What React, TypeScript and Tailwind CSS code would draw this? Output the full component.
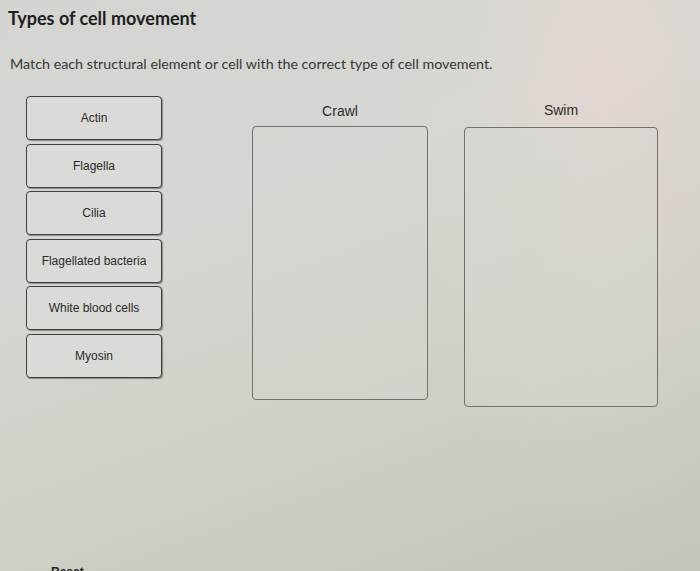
import React from "react";

const items = [
  "Actin",
  "Flagella",
  "Cilia",
  "Flagellated bacteria",
  "White blood cells",
  "Myosin",
];

// Drop zone with its label above
const Zone: React.FC<{ label: string; w: string; h: string; mt: string; mb: string }> = ({ label, w, h, mt, mb }) => (
  <div className={`flex flex-col items-center ${w} ${mt}`}>
    <div className={`text-[14px] text-[#2b2b2b] leading-[18px] ${mb} font-['Liberation_Sans',sans-serif]`}>
      {label}
    </div>
    <div className={`w-full ${h} border border-[#6f716c] rounded-[4px] bg-[#d6d8d2]/40`} />
  </div>
);

const App: React.FC = () => {
  return (
    <div className="w-[700px] h-[571px] overflow-hidden relative bg-[linear-gradient(160deg,#d4d5d0_0%,#d6d7d2_35%,#cdcec4_70%,#c3c5b8_100%)] font-['Lato',sans-serif]">
      {/* Warm glare on the right side */}
      <div className="absolute right-0 top-0 w-[320px] h-[571px] bg-[radial-gradient(ellipse_at_70%_20%,rgba(236,214,210,0.5),rgba(236,214,210,0)_65%)] pointer-events-none" />

      <div className="relative">
        <h1 className="pl-[8px] pt-[6px] text-[18px] font-bold text-[#1e1e1e] leading-[24px]">
          Types of cell movement
        </h1>
        <p className="pl-[10px] pt-[25px] text-[14.3px] text-[#353535] leading-[18px]">
          Match each structural element or cell with the correct type of cell movement.
        </p>

        <div className="flex pl-[26px] pt-[16px]">
          {/* Draggable answers */}
          <div className="flex flex-col gap-[3.5px] pt-[7px]">
            {items.map((t, i) => (
              <div
                key={i}
                className="w-[136px] h-[44px] flex items-center justify-center rounded-[4px] border-[1.5px] border-[#3f403d] bg-[#dadbd7] shadow-[1px_1px_1px_rgba(0,0,0,0.35)] text-[12px] text-[#2a2a2a] font-['Liberation_Sans',sans-serif]"
              >
                {t}
              </div>
            ))}
          </div>

          <div className="ml-[90px] flex gap-[36px]">
            <Zone label="Crawl" w="w-[176px]" h="h-[274px]" mt="mt-[13px]" mb="mb-[6px]" />
            <Zone label="Swim" w="w-[194px]" h="h-[280px]" mt="mt-[12px]" mb="mb-[8px]" />
          </div>
        </div>

        <div className="absolute left-[51px] top-[563px] text-[12px] font-bold text-[#222] font-['Liberation_Sans',sans-serif]">
          Reset
        </div>
      </div>
    </div>
  );
};

export default App;
